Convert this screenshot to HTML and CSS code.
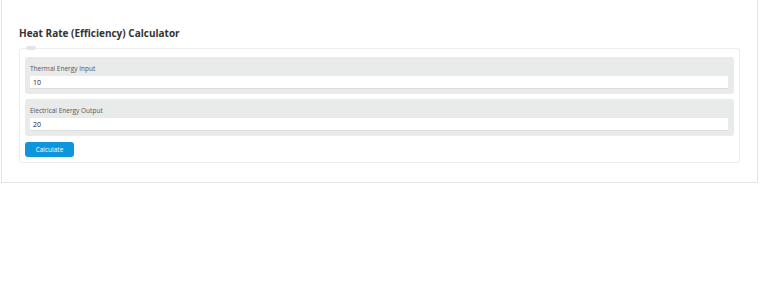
FILE: index.html
```html
<!DOCTYPE html>
<html>
<head>
<meta charset="utf-8">
<link rel="stylesheet" href="styles.css">
</head>
<body>
<div class="page">
  <h2 class="title">Heat Rate (Efficiency) Calculator</h2>
  <fieldset class="calc">
    <legend class="legend"></legend>
    <div class="group">
      <label class="label">Thermal Energy Input</label>
      <input class="input" type="text" value="10">
    </div>
    <div class="group">
      <label class="label">Electrical Energy Output</label>
      <input class="input" type="text" value="20">
    </div>
    <button class="btn">Calculate</button>
  </fieldset>
</div>
</body>
</html>
```
FILE: styles.css
```css
html, body {
  margin: 0;
  padding: 0;
  background: #ffffff;
  font-family: "Open Sans", "Noto Sans", sans-serif;
}
.page {
  margin-left: 1px;
  width: 757px;
  height: 183px;
  border: 1px solid #e3e3e3;
  border-top: none;
  padding: 0 17px 0 17px;
  box-sizing: border-box;
}
.title {
  margin: 0;
  padding-top: 25px;
  font-size: 10px;
  line-height: 16px;
  font-weight: 700;
  color: #333333;
}
.calc {
  margin: 5px 0 0 0;
  padding: 0 5px 5px 5px;
  border: 1px solid #ededed;
  border-radius: 3px;
  width: 721px;
  box-sizing: border-box;
}
.legend {
  width: 10px;
  height: 4px;
  padding: 0;
  margin-left: 1px;
  background: #e4e4e4;
  border-radius: 2px;
}
.group {
  background: #e9eaea;
  border-radius: 3px;
  padding: 6px 6px 5px 5px;
  margin-top: 7px;
}
.group + .group {
  margin-top: 5px;
}
.label {
  display: block;
  font-size: 6.5px;
  line-height: 11px;
  color: #555555;
  margin-bottom: 2px;
}
.input {
  display: block;
  width: 100%;
  box-sizing: border-box;
  height: 13px;
  border: none;
  box-shadow: inset 0 -1px 0 #dcdcdc;
  background: #ffffff;
  padding: 0 3px;
  font-family: "Open Sans", "Noto Sans", sans-serif;
  font-size: 7px;
  color: #222222;
  outline: none;
}
.btn {
  display: block;
  margin-top: 6px;
  width: 49px;
  height: 15px;
  padding: 0;
  border: none;
  border-radius: 3px;
  background: #0d96db;
  color: #ffffff;
  font-family: "Open Sans", "Noto Sans", sans-serif;
  font-size: 6.5px;
  line-height: 15px;
}
```
